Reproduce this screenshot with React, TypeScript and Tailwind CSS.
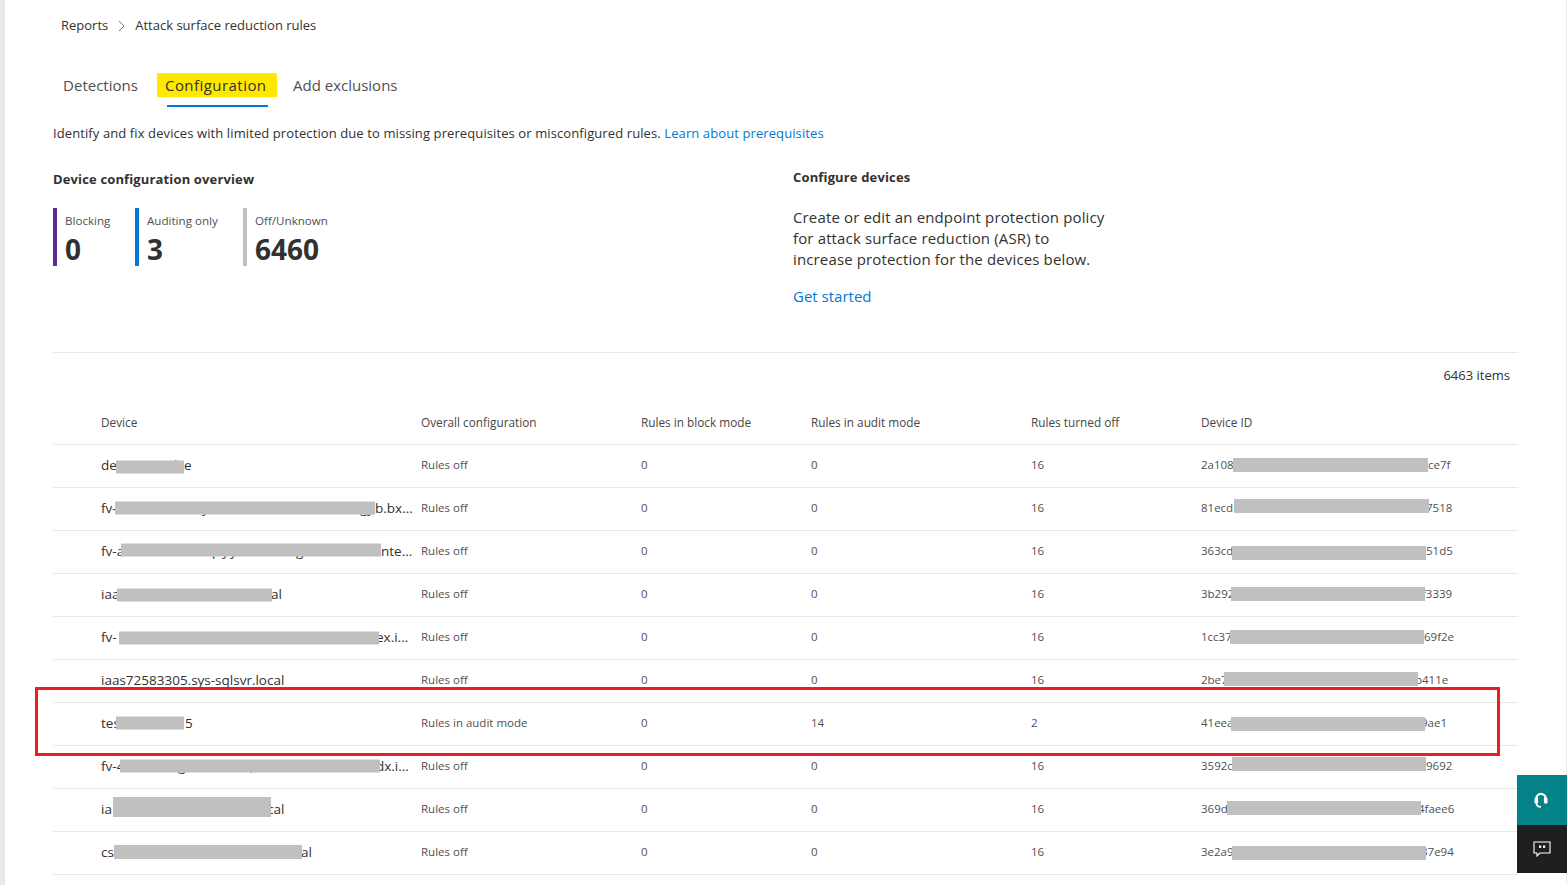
const font = "font-['Open_Sans','Liberation_Sans',sans-serif]";

// left/right/y are where the redaction sits on the page, shift pulls the tail text under it
type Peek = { x: number; ch: string };
type Part = { pre: string; left?: number; right?: number; y?: number; h?: number; post?: string; shift?: number; peeks?: Peek[] };
type Row = { device: Part; config: string; audit: string; off: string; id: Part };

const rows: Row[] = [
  { device: { pre: 'de', left: 116, right: 184, y: 460, h: 13, post: 'e', peeks: [{ x: 163, ch: 'i' }, { x: 174, ch: 'l' }] }, config: 'Rules off', audit: '0', off: '16', id: { pre: '2a108', left: 1233, right: 1428, y: 458, h: 14, post: 'ce7f' } },
  { device: { pre: 'fv-', left: 115, right: 375, y: 501, h: 13, post: 'b.bx...', peeks: [{ x: 202, ch: 'y' }, { x: 360, ch: 'g' }, { x: 367, ch: 'y' }] }, config: 'Rules off', audit: '0', off: '16', id: { pre: '81ecd', left: 1234, right: 1429, y: 499, h: 14, post: '7518', shift: -3 } },
  { device: { pre: 'fv-a', left: 121, right: 381, y: 543, h: 13, post: 'nte...', peeks: [{ x: 212, ch: 'p' }, { x: 222, ch: 'y' }, { x: 230, ch: 'y' }, { x: 296, ch: 'g' }] }, config: 'Rules off', audit: '0', off: '16', id: { pre: '363cd', left: 1232, right: 1426, y: 546, h: 14, post: '51d5' } },
  { device: { pre: 'iaa', left: 117, right: 272, y: 588, h: 13, post: 'al', shift: -1 }, config: 'Rules off', audit: '0', off: '16', id: { pre: '3b292', left: 1231, right: 1425, y: 587, h: 14, post: 'f3339', shift: -3 } },
  { device: { pre: 'fv-', left: 119, right: 379, y: 631, h: 13, post: 'ex.i...', shift: -3 }, config: 'Rules off', audit: '0', off: '16', id: { pre: '1cc37', left: 1230, right: 1424, y: 630, h: 14, post: '69f2e' } },
  { device: { pre: 'iaas72583305.sys-sqlsvr.local' }, config: 'Rules off', audit: '0', off: '16', id: { pre: '2be7', left: 1224, right: 1418, y: 672, h: 14, post: 'b411e', shift: -3 } },
  { device: { pre: 'tes', left: 116, right: 184, y: 716, h: 13, post: '5', shift: 1 }, config: 'Rules in audit mode', audit: '14', off: '2', id: { pre: '41eea', left: 1231, right: 1425, y: 717, h: 14, post: '9ae1', shift: -4 } },
  { device: { pre: 'fv-4', left: 120, right: 380, y: 759, h: 13, post: 'dx.i...', shift: -4, peeks: [{ x: 178, ch: 'g' }, { x: 250, ch: ',' }] }, config: 'Rules off', audit: '0', off: '16', id: { pre: '3592c', left: 1232, right: 1426, y: 757, h: 14, post: '9692' } },
  { device: { pre: 'ia', left: 113, right: 271, y: 797, h: 20, post: 'cal', shift: -4 }, config: 'Rules off', audit: '0', off: '16', id: { pre: '369d', left: 1227, right: 1421, y: 801, h: 14, post: '4faee6', shift: -3 } },
  { device: { pre: 'cs', left: 114, right: 302, y: 845, h: 14, post: 'al', shift: -1 }, config: 'Rules off', audit: '0', off: '16', id: { pre: '3e2a9', left: 1232, right: 1426, y: 846, h: 14, post: '37e94', shift: -5 } },
];

const stats = [
  { label: 'Blocking', value: '0', bar: 'border-[#5c2d91]', width: 'w-[82px]' },
  { label: 'Auditing only', value: '3', bar: 'border-[#0078d4]', width: 'w-[108px]' },
  { label: 'Off/Unknown', value: '6460', bar: 'border-[#bfbfbf]', width: 'w-[100px]' },
];

const Redacted = ({ part, cellX, rowIndex, className }: { part: Part; cellX: number; rowIndex: number; className: string }) => {
  const rowMiddle = 465 + 43 * rowIndex;
  return (
    <div className={`relative flex items-center whitespace-nowrap ${className}`}>
      {part.peeks?.map((p) => (
        <span key={p.x} className="absolute" style={{ left: p.x - cellX }}>{p.ch}</span>
      ))}
      {part.left === undefined ? (
        <span>{part.pre}</span>
      ) : (
        <>
          <span style={{ width: part.left - cellX }}>{part.pre}</span>
          <span
            className="relative bg-[#c0c0c0]"
            style={{
              width: part.right! - part.left,
              height: part.h,
              transform: `translateY(${part.y! + part.h! / 2 - rowMiddle}px)`,
            }}
          />
          <span style={{ marginLeft: part.shift ?? 0 }}>{part.post}</span>
        </>
      )}
    </div>
  );
};

const HeadsetIcon = () => (
  <svg className="mb-[1px] mr-[2px] shrink-0" width="14" height="16" viewBox="0 0 14 16" fill="none">
    <path d="M2.4 9V6.5a4.6 4.6 0 0 1 9.2 0V9" stroke="white" strokeWidth="2.4" />
    <rect x="0.5" y="5.5" width="3.6" height="6" rx="1.2" fill="white" />
    <rect x="9.9" y="5.5" width="3.6" height="6" rx="1.2" fill="white" />
    <path d="M2.4 11c0 2.6 1.6 3.8 4.6 3.8" stroke="white" strokeWidth="1.8" />
  </svg>
);

const ChatIcon = () => (
  <svg width="18" height="17" viewBox="0 0 18 17" fill="none">
    <path d="M1 1h16v11H7l-3 3v-3H1z" stroke="white" strokeWidth="1.1" />
    <rect x="6" y="4.5" width="2.2" height="2.4" fill="white" />
    <rect x="10" y="4.5" width="2.2" height="2.4" fill="white" />
  </svg>
);

export default function App() {
  return (
    <div className={`relative flex h-[885px] overflow-hidden bg-white text-[#323130] ${font}`}>
      <div className="w-[5px] shrink-0 bg-[#e8e8e8]" />
      <main className="flex-1 pl-[48px] pr-[48px]">
        <nav className="flex h-[52px] items-center pl-[8px] text-[13px]">
          <span>Reports</span>
          <svg className="mx-[9px]" width="9" height="12" viewBox="0 0 9 12" fill="none">
            <path d="M2 1l5 5-5 5" stroke="#777" />
          </svg>
          <span>Attack surface reduction rules</span>
        </nav>

        <div className="mt-[21px] flex h-[46px] items-start pl-[10px] text-[15px]">
          <button className="h-[24px] w-[75px] whitespace-nowrap leading-[24px] text-[#505050]">Detections</button>
          <div className="ml-[19px] flex w-[120px] flex-col items-center">
            <button className="h-[24px] w-full bg-[#ffe800] pl-[8px] text-left leading-[24px] tracking-[0.45px]">Configuration</button>
            <div className="mt-[8px] h-[2px] w-[101px] bg-[#0078d4]" />
          </div>
          <button className="ml-[16px] h-[24px] whitespace-nowrap leading-[24px] text-[#505050]">Add exclusions</button>
        </div>

        <p className="mt-[4px] text-[13px] leading-[20px] tracking-[0.1px]">
          Identify and fix devices with limited protection due to missing prerequisites or misconfigured rules.{' '}
          <a className="text-[#0078d4]">Learn about prerequisites</a>
        </p>

        <section className="flex h-[210px] border-b border-[#e8e8e8]">
          <div className="w-[740px]">
            <h2 className="mt-[26px] text-[13px] font-bold leading-[20px] tracking-[0.14px]">Device configuration overview</h2>
            <div className="mt-[19px] flex">
              {stats.map((s) => (
                <div key={s.label} className={`h-[58px] border-l-4 pl-[8px] ${s.bar} ${s.width}`}>
                  <div className="mt-[5px] text-[11.6px] leading-[16px] text-[#505050]">{s.label}</div>
                  <div className="mt-[2px] text-[28px] font-bold leading-[36px]">{s.value}</div>
                </div>
              ))}
            </div>
          </div>
          <div>
            <h2 className="mt-[24px] text-[13px] font-bold leading-[20px] tracking-[0.15px]">Configure devices</h2>
            <p className="mt-[20px] w-[316px] text-[15px] leading-[21px] tracking-[0.14px]">
              Create or edit an endpoint protection policy for attack surface reduction (ASR) to increase protection for the devices below.
            </p>
            <a className="mt-[16px] block text-[15px] leading-[20px] text-[#0078d4]">Get started</a>
          </div>
        </section>

        <div className="h-[45px] pr-[8px] pt-[12px] text-right text-[13px] leading-[20px]">6463 items</div>

        <div className="grid h-[47px] grid-cols-[48px_320px_220px_170px_220px_170px_1fr] items-center border-b border-[#e8e8e8] pt-[3px] text-[11.8px] text-[#484644]">
          <span />
          <span>Device</span>
          <span>Overall configuration</span>
          <span>Rules in block mode</span>
          <span>Rules in audit mode</span>
          <span>Rules turned off</span>
          <span>Device ID</span>
        </div>
        {rows.map((r, i) => (
          <div key={r.id.pre} className="grid h-[43px] grid-cols-[48px_320px_220px_170px_220px_170px_1fr] items-center border-b border-[#e8e8e8] pb-[2px] text-[11.5px] text-[#505050]">
            <span />
            <Redacted part={r.device} cellX={101} rowIndex={i} className="text-[13.5px] font-medium text-[#323130]" />
            <span>{r.config}</span>
            <span>0</span>
            <span>{r.audit}</span>
            <span>{r.off}</span>
            <Redacted part={r.id} cellX={1201} rowIndex={i} className="" />
          </div>
        ))}
      </main>
      <div className="w-px shrink-0 bg-[#ececec]" />

      <div className="pointer-events-none absolute left-[35px] top-[687px] h-[69px] w-[1465px] border-[3px] border-[#ed1c24]" />

      <div className="absolute left-[1517px] top-[775px] flex h-[50px] w-[50px] items-center justify-center bg-[#038387]">
        <HeadsetIcon />
      </div>
      <div className="absolute left-[1517px] top-[825px] flex h-[48px] w-[50px] items-center justify-center bg-[#201f1e]">
        <ChatIcon />
      </div>
    </div>
  );
}
